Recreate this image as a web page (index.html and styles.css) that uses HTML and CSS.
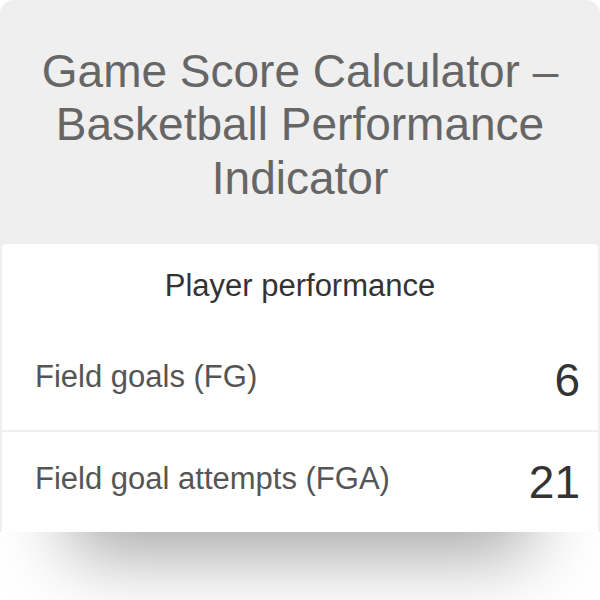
FILE: index.html
```html
<!DOCTYPE html>
<html lang="en">

<head>
  <meta charset="UTF-8">
  <title>Game Score Calculator</title>
  <link rel="stylesheet" href="styles.css">
</head>

<body>
  <div class="calculator">
    <h1 class="calc-title">Game Score Calculator – Basketball Performance Indicator</h1>
    <div class="calc-body">
      <h2 class="section-title">Player performance</h2>
      <div class="field-row">
        <label for="fg">Field goals (FG)</label>
        <span id="fg" class="field-value">6</span>
      </div>
      <div class="field-row">
        <label for="fga">Field goal attempts (FGA)</label>
        <span id="fga" class="field-value">21</span>
      </div>
    </div>
  </div>
</body>

</html>
```

FILE: styles.css
```css
body {
  font-family: "Liberation Sans", Arial, sans-serif;
  margin: 0;
  background: #fff;
  min-height: 100vh;
}

.calculator {
  background: #efefef;
  border-radius: 14px 14px 0 0;
  padding: 0 2px;
  box-shadow: 0 92px 70px -70px rgba(0, 0, 0, 0.36);
}

.calc-title {
  margin: 0;
  padding: 45px 30px 39px 30px;
  font-size: 46px;
  line-height: 53.4px;
  font-weight: 400;
  color: #666;
  text-align: center;
}

.calc-body {
  background: #fff;
  border-radius: 4px 4px 0 0;
}

.section-title {
  margin: 0;
  padding: 25px 0 27px 0;
  font-size: 31px;
  line-height: 34px;
  font-weight: 400;
  color: #333;
  text-align: center;
}

.field-row {
  display: flex;
  align-items: center;
  justify-content: space-between;
  height: 100px;
  padding: 0 18px 0 33px;
}

.field-row + .field-row {
  border-top: 2px solid #efefef;
}

.field-row label {
  font-size: 31px;
  color: #555;
  padding-bottom: 6px;
}

.field-value {
  font-size: 46px;
  color: #333;
}
```
